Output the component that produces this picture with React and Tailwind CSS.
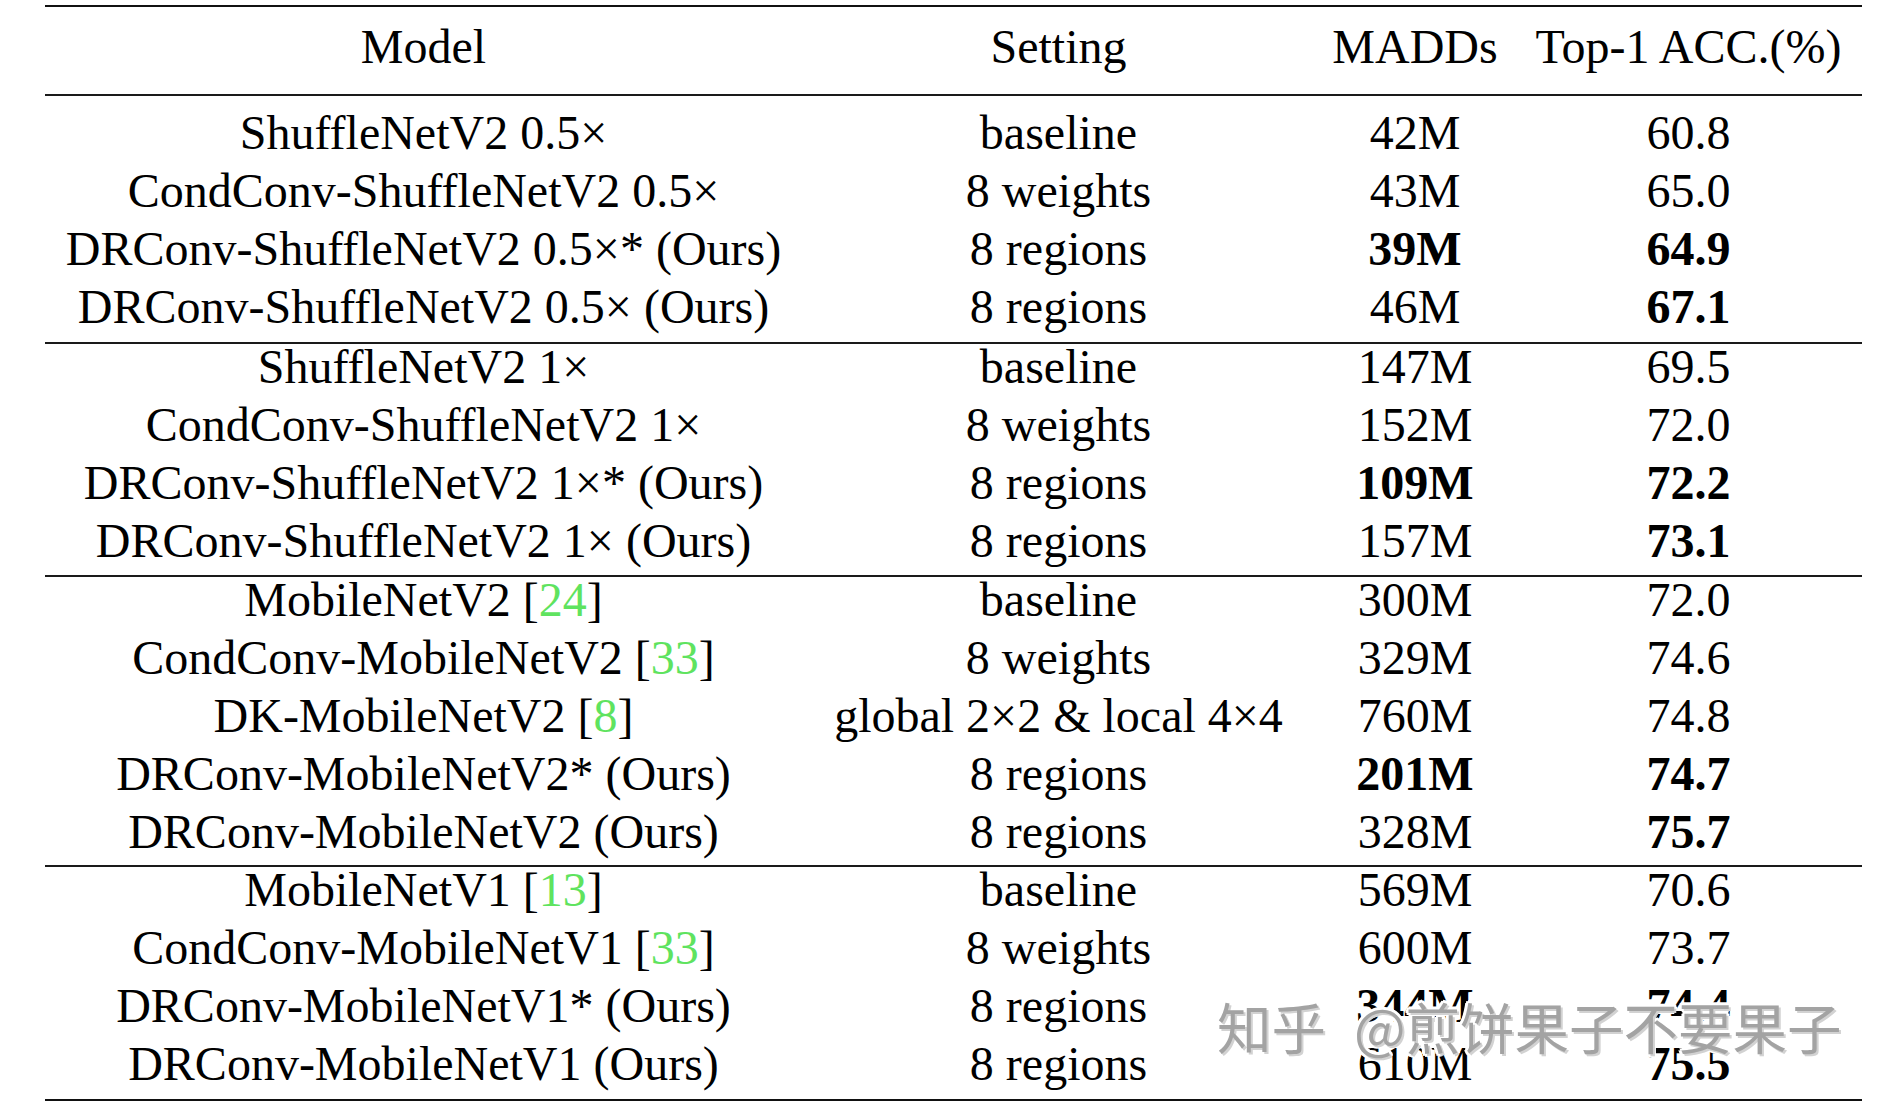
const serif = { fontFamily: '"Liberation Serif", "Times New Roman", serif' }

function Ref({ n }) {
  return <>[<span className="text-[#5fe35f]">{n}</span>]</>
}

const sections = [
  {
    pad: 'pt-[14px]',
    last: 'last:pb-[12px]',
    rows: [
      ['ShuffleNetV2 0.5×', 'baseline', '42M', '60.8'],
      ['CondConv-ShuffleNetV2 0.5×', '8 weights', '43M', '65.0'],
      ['DRConv-ShuffleNetV2 0.5×* (Ours)', '8 regions', '39M', '64.9', true, true],
      ['DRConv-ShuffleNetV2 0.5× (Ours)', '8 regions', '46M', '67.1', false, true],
    ],
  },
  {
    pad: '',
    last: 'last:pb-[11px]',
    rows: [
      ['ShuffleNetV2 1×', 'baseline', '147M', '69.5'],
      ['CondConv-ShuffleNetV2 1×', '8 weights', '152M', '72.0'],
      ['DRConv-ShuffleNetV2 1×* (Ours)', '8 regions', '109M', '72.2', true, true],
      ['DRConv-ShuffleNetV2 1× (Ours)', '8 regions', '157M', '73.1', false, true],
    ],
  },
  {
    pad: '',
    last: 'last:pb-[10px]',
    rows: [
      [<>MobileNetV2 <Ref n="24" /></>, 'baseline', '300M', '72.0'],
      [<>CondConv-MobileNetV2 <Ref n="33" /></>, '8 weights', '329M', '74.6'],
      [<>DK-MobileNetV2 <Ref n="8" /></>, 'global 2×2 & local 4×4', '760M', '74.8'],
      ['DRConv-MobileNetV2* (Ours)', '8 regions', '201M', '74.7', true, true],
      ['DRConv-MobileNetV2 (Ours)', '8 regions', '328M', '75.7', false, true],
    ],
  },
  {
    pad: '',
    last: 'last:pb-[12px]',
    rows: [
      [<>MobileNetV1 <Ref n="13" /></>, 'baseline', '569M', '70.6'],
      [<>CondConv-MobileNetV1 <Ref n="33" /></>, '8 weights', '600M', '73.7'],
      ['DRConv-MobileNetV1* (Ours)', '8 regions', '344M', '74.4', true, true],
      ['DRConv-MobileNetV1 (Ours)', '8 regions', '610M', '75.5', false, true],
    ],
  },
]

const cols = 'grid grid-cols-[757px_513px_200px_347px] text-center'

export default function App() {
  return (
    <div className="relative w-[1894px] h-[1108px] overflow-hidden bg-white text-black" style={serif}>
      <div className="ml-[45px] mt-[5px] w-[1817px] text-[48px]">
        {/* header */}
        <div className={`${cols} border-t-2 border-[#111] pt-[17px] pb-[24px] leading-[46px]`}>
          <div>Model</div>
          <div>Setting</div>
          <div>MADDs</div>
          <div>Top-1 ACC.(%)</div>
        </div>

        {sections.map((s, i) => (
          <div key={i} className={`border-t-2 border-[#1a1a1a] ${s.pad}`}>
            {s.rows.map((r, j) => (
              <div key={j} className={`${cols} leading-[46px] pb-[12px] ${s.last} whitespace-nowrap`}>
                <div>{r[0]}</div>
                <div>{r[1]}</div>
                <div className={r[4] ? 'font-bold' : ''}>{r[2]}</div>
                <div className={r[5] ? 'font-bold' : ''}>{r[3]}</div>
              </div>
            ))}
          </div>
        ))}
        <div className="h-[2px] bg-[#111]" />
      </div>

      {/* zhihu watermark */}
      <div
        className="absolute left-[1217px] top-[999px] whitespace-nowrap text-[54.5px] leading-none text-[#a3a3a3] [text-shadow:2px_2px_0_#d2d2d2,-2px_-2px_0_#fff,2px_-2px_0_#fff,-2px_2px_0_#fff,0_-3px_0_#fff,0_3px_0_#fff,-3px_0_0_#fff,3px_0_0_#fff]"
        style={{ fontFamily: '"Noto Sans CJK SC", "Noto Sans", sans-serif' }}
      >
        知乎<span className="ml-[28px]">@煎饼果子不要果子</span>
      </div>
    </div>
  )
}
